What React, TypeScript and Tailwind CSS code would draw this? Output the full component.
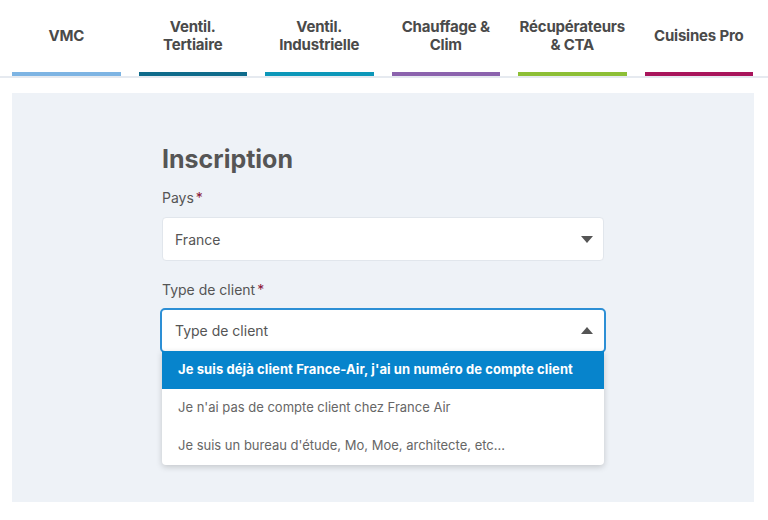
const tabs = [
  { label: ["VMC"], bar: "bg-[#7db4e3]" },
  { label: ["Ventil.", "Tertiaire"], bar: "bg-[#0e6b8b]" },
  { label: ["Ventil.", "Industrielle"], bar: "bg-[#0c97b9]" },
  { label: ["Chauffage &", "Clim"], bar: "bg-[#8b62ad]" },
  { label: ["Récupérateurs", "& CTA"], bar: "bg-[#8dbf36]" },
  { label: ["Cuisines Pro"], bar: "bg-[#a8145b]" },
];

const options = [
  "Je suis déjà client France-Air, j'ai un numéro de compte client",
  "Je n'ai pas de compte client chez France Air",
  "Je suis un bureau d'étude, Mo, Moe, architecte, etc...",
];

function Caret({ up }: { up?: boolean }) {
  return (
    <svg width="12" height="7" viewBox="0 0 12 7" className={up ? "rotate-180" : ""}>
      <path d="M0 0 L12 0 L6 7 Z" fill="#555" />
    </svg>
  );
}

export default function App() {
  return (
    <div className="w-[768px] h-[520px] bg-white overflow-hidden font-['Inter',sans-serif] text-[#555]">
      {/* Top nav */}
      <nav className="border-b-[2px] border-[#e6eaf0]">
        <div className="flex gap-[18px] pl-[12px] pr-[15px]">
          {tabs.map((t) => (
            <div key={t.label.join(" ")} className="flex-1 flex flex-col">
              <div className="h-[72px] flex flex-col items-center justify-center text-[15px] font-bold leading-[18px] text-[#4a4a4a] text-center tracking-[-0.2px]">
                {t.label.map((l) => (
                  <span key={l}>{l}</span>
                ))}
              </div>
              <div className={`h-[4px] ${t.bar}`} />
            </div>
          ))}
        </div>
      </nav>

      {/* Panel */}
      <div className="mt-[15px] mx-[12px] mr-[14px] h-[409px] bg-[#eef2f7]">
        <div className="w-[442px] mx-auto pt-[51px] relative">
          <h1 className="text-[25px] font-bold text-[#555] leading-[30px]">Inscription</h1>

          <label className="block mt-[15px] text-[14px] leading-[18px] text-[#555]">
            Pays<span className="text-[#8a1538] ml-[2px]">*</span>
          </label>
          <div className="mt-[10px] h-[44px] bg-white border border-[#e1e6ec] rounded-[4px] flex items-center justify-between pl-[12px] pr-[10px] text-[14px] text-[#555]">
            <span>France</span>
            <Caret />
          </div>

          <label className="block mt-[20px] text-[14px] leading-[18px] text-[#555]">
            Type de client<span className="text-[#8a1538] ml-[2px]">*</span>
          </label>
          <div className="relative mt-[9px] -mx-[2px]">
            <div className="h-[45px] bg-white border-[2px] border-[#2d8fd5] rounded-[5px] flex items-center justify-between pl-[13px] pr-[11px] text-[14px] text-[#555]">
              <span>Type de client</span>
              <Caret up />
            </div>
            <ul className="absolute left-[2px] right-[2px] top-[43px] bg-white rounded-b-[4px] shadow-[0_2px_6px_rgba(0,0,0,0.18)] text-[13px]">
              {options.map((o, i) => (
                <li
                  key={o}
                  className={
                    i === 0
                      ? "h-[38px] flex items-center px-[16px] bg-[#0784cc] text-white font-bold tracking-[0.1px]"
                      : "h-[38px] flex items-center px-[16px] text-[#666]"
                  }
                >
                  {o}
                </li>
              ))}
            </ul>
          </div>
        </div>
      </div>
    </div>
  );
}
